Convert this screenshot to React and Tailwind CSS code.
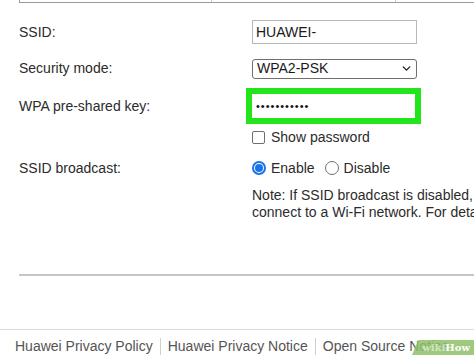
import { ChevronDown } from 'lucide-react'

const FOOTER_LINKS = ['Huawei Privacy Policy', 'Huawei Privacy Notice', 'Open Source Notice']

function Label({ children }) {
  return <div className="w-[252px] shrink-0 pl-[19px] text-[#2b2b2b]">{children}</div>
}

export default function App() {
  return (
    <div className="relative w-[474px] h-[355px] overflow-hidden bg-white text-[14px] font-['Liberation_Sans',Arial,sans-serif]">
      {/* bottom edge of the box above */}
      <div className="ml-[19px] flex h-[3px] border-l border-b border-[#9a9a9a]">
        <div className="w-[192px] border-r border-[#d0d0d0]" />
        <div className="w-[184px] border-r border-[#d0d0d0]" />
        <div className="flex-1" />
      </div>

      {/* SSID */}
      <div className="mt-[17px] flex h-[24px] items-center">
        <Label>SSID:</Label>
        <div className="flex h-[24px] w-[165px] items-center border border-[#b8b8b8] px-[3px] text-[#1a1a1a]">
          HUAWEI-
        </div>
      </div>

      {/* Security mode */}
      <div className="mt-[15px] flex h-[19px] items-center">
        <Label>Security mode:</Label>
        <div className="flex h-[20px] w-[165px] items-center justify-between rounded-[3px] border border-[#6f6f6f] pl-[4px] pr-[3px] text-[#1a1a1a]">
          <span>WPA2-PSK</span>
          <ChevronDown size={13} strokeWidth={2.6} className="text-[#222]" />
        </div>
      </div>

      {/* WPA key */}
      <div className="mt-[16px] flex h-[24px] items-center">
        <Label>WPA pre-shared key:</Label>
        <div className="flex h-[24px] w-[163px] items-center bg-white px-[4px] text-[#111] outline-[6px] outline-solid outline-[#22e51b]">
          <span className="text-[11px] tracking-[1px]">•••••••••••</span>
        </div>
      </div>

      {/* show password */}
      <div className="mt-[12px] flex h-[14px] items-center">
        <div className="w-[252px] shrink-0" />
        <div className="flex items-center gap-[6px] text-[#2b2b2b]">
          <div className="h-[13px] w-[13px] rounded-[2px] border border-[#6f6f6f] bg-white" />
          <span>Show password</span>
        </div>
      </div>

      {/* SSID broadcast */}
      <div className="mt-[17px] flex h-[14px] items-center">
        <Label>SSID broadcast:</Label>
        <div className="flex items-center text-[#2b2b2b]">
          <div className="flex h-[14px] w-[14px] items-center justify-center rounded-full border-2 border-[#1a73e8] bg-white">
            <div className="h-[8px] w-[8px] rounded-full bg-[#1a73e8]" />
          </div>
          <span className="ml-[5px]">Enable</span>
          <div className="ml-[10px] h-[14px] w-[14px] rounded-full border border-[#6f6f6f] bg-white" />
          <span className="ml-[5px]">Disable</span>
        </div>
      </div>

      {/* note */}
      <div className="mt-[12px] ml-[252px] whitespace-nowrap leading-[17px] text-[#2b2b2b]">
        <p>Note: If SSID broadcast is disabled, your device cannot</p>
        <p>connect to a Wi-Fi network. For details, see the help.</p>
      </div>

      <div className="mt-[53px] ml-[19px] h-[2px] bg-[#c6c6c6]" />

      {/* footer */}
      <div className="mt-[53px] flex h-[34px] items-center border-t border-[#dadada] pl-[15px] whitespace-nowrap text-[#555]">
        {FOOTER_LINKS.map((l, i) => (
          <div key={l} className="flex items-center">
            {i > 0 && <span className="mx-[7px] h-[18px] w-px bg-[#cfcfcf]" />}
            <span>{l}</span>
          </div>
        ))}
      </div>

      {/* watermark */}
      <div className="absolute bottom-0 right-0 flex h-[15px] w-[62px] items-center justify-end pr-[4px] bg-[#8fbf6a]/85 [clip-path:polygon(10%_0,100%_0,100%_100%,0_100%)] font-['DejaVu_Serif',serif] text-[10px] font-bold">
        <span className="text-[#cfe6bf]">wiki</span>
        <span className="text-white">How</span>
      </div>
    </div>
  )
}
